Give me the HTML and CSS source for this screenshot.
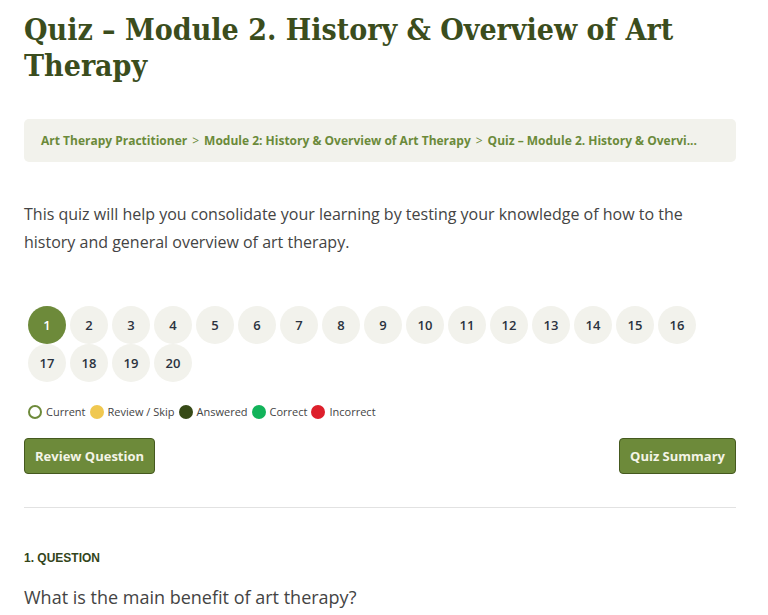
FILE: index.html
```html
<!DOCTYPE html>
<html>
<head>
<meta charset="utf-8">
<link rel="stylesheet" href="styles.css">
</head>
<body>
<main class="page">
  <h1 class="title">Quiz – Module 2. History &amp; Overview of Art Therapy</h1>
  <nav class="crumbs">
    <a>Art Therapy Practitioner</a><span class="sep">&gt;</span><a>Module 2: History &amp; Overview of Art Therapy</a><span class="sep">&gt;</span><a>Quiz – Module 2. History &amp; Overvi...</a>
  </nav>
  <p class="intro">This quiz will help you consolidate your learning by testing your knowledge of how to the history and general overview of art therapy.</p>
  <ol class="qlist">
    <li class="q active">1</li><li class="q">2</li><li class="q">3</li><li class="q">4</li><li class="q">5</li><li class="q">6</li><li class="q">7</li><li class="q">8</li><li class="q">9</li><li class="q">10</li><li class="q">11</li><li class="q">12</li><li class="q">13</li><li class="q">14</li><li class="q">15</li><li class="q">16</li><li class="q">17</li><li class="q">18</li><li class="q">19</li><li class="q">20</li>
  </ol>
  <div class="legend">
    <span class="lg"><i class="dot current"></i>Current</span>
    <span class="lg"><i class="dot review"></i>Review / Skip</span>
    <span class="lg"><i class="dot answered"></i>Answered</span>
    <span class="lg"><i class="dot correct"></i>Correct</span>
    <span class="lg"><i class="dot incorrect"></i>Incorrect</span>
  </div>
  <div class="actions">
    <button class="btn">Review Question</button>
    <button class="btn">Quiz Summary</button>
  </div>
  <hr class="rule">
  <h2 class="qhead">1. Question</h2>
  <p class="qtext">What is the main benefit of art therapy?</p>
</main>
</body>
</html>
```
FILE: styles.css
```css
* { box-sizing: border-box; }
html, body { margin: 0; padding: 0; background: #fff; }
body { font-family: "Open Sans", "Noto Sans", sans-serif; color: #444; }
.page { padding: 12px 32px 0 24px; width: 768px; }
.title {
  font-family: "DejaVu Serif Condensed", "Liberation Serif", serif;
  font-weight: 700;
  font-size: 30px;
  line-height: 36px;
  color: #3b4d1d;
  margin: 0 0 35px 0;
}
.crumbs {
  background: #f2f2ec;
  border-radius: 5px;
  height: 43px;
  padding: 0 17px;
  display: flex;
  align-items: center;
  font-size: 12px;
  font-weight: 700;
  color: #6b8a3a;
  white-space: nowrap;
}
.crumbs .sep { margin: 0 5px; color: #6b8a3a; font-weight: 400; }
.intro {
  font-size: 16px;
  line-height: 28px;
  margin: 38px 0 0 0;
  color: #444;
}
.qlist {
  list-style: none;
  margin: 50px 0 0 0;
  padding: 0 0 0 2px;
  display: flex;
  flex-wrap: wrap;
}
.q {
  width: 38px; height: 38px;
  margin: 0 2px;
  border-radius: 50%;
  background: #f2f2ec;
  display: flex; align-items: center; justify-content: center;
  font-size: 13px; font-weight: 600;
  color: #2b3240;
}
.q.active { background: #6d8a3a; color: #fff; }
.legend {
  margin-top: 22px;
  display: flex;
  gap: 4px;
  font-size: 11px;
  color: #444;
  align-items: center;
  padding-left: 4px;
}
.lg { display: flex; align-items: center; gap: 4px; }
.dot { width: 14px; height: 14px; border-radius: 50%; display: inline-block; }
.dot.current { border: 2px solid #6d8a3a; background: #fff; }
.dot.review { background: #f0c850; }
.dot.answered { background: #374a17; }
.dot.correct { background: #12b35a; }
.dot.incorrect { background: #dd1f2b; }
.actions { display: flex; justify-content: space-between; margin-top: 19px; }
.btn {
  font-family: "Open Sans", sans-serif;
  background: #6d8a3a;
  border: 1px solid #45591f;
  border-radius: 4px;
  color: #f4f4e6;
  font-weight: 700;
  font-size: 13px;
  height: 36px;
  padding: 0 10px;
}
.rule { border: 0; border-top: 1px solid #e2e2e2; margin: 33px 0 0 0; }
.qhead {
  font-family: "Liberation Sans", sans-serif;
  font-size: 12px;
  font-weight: 700;
  text-transform: uppercase;
  color: #33451a;
  margin: 43px 0 0 0;
}
.qtext { font-size: 18px; margin: 20px 0 0 0; color: #444; }
```
